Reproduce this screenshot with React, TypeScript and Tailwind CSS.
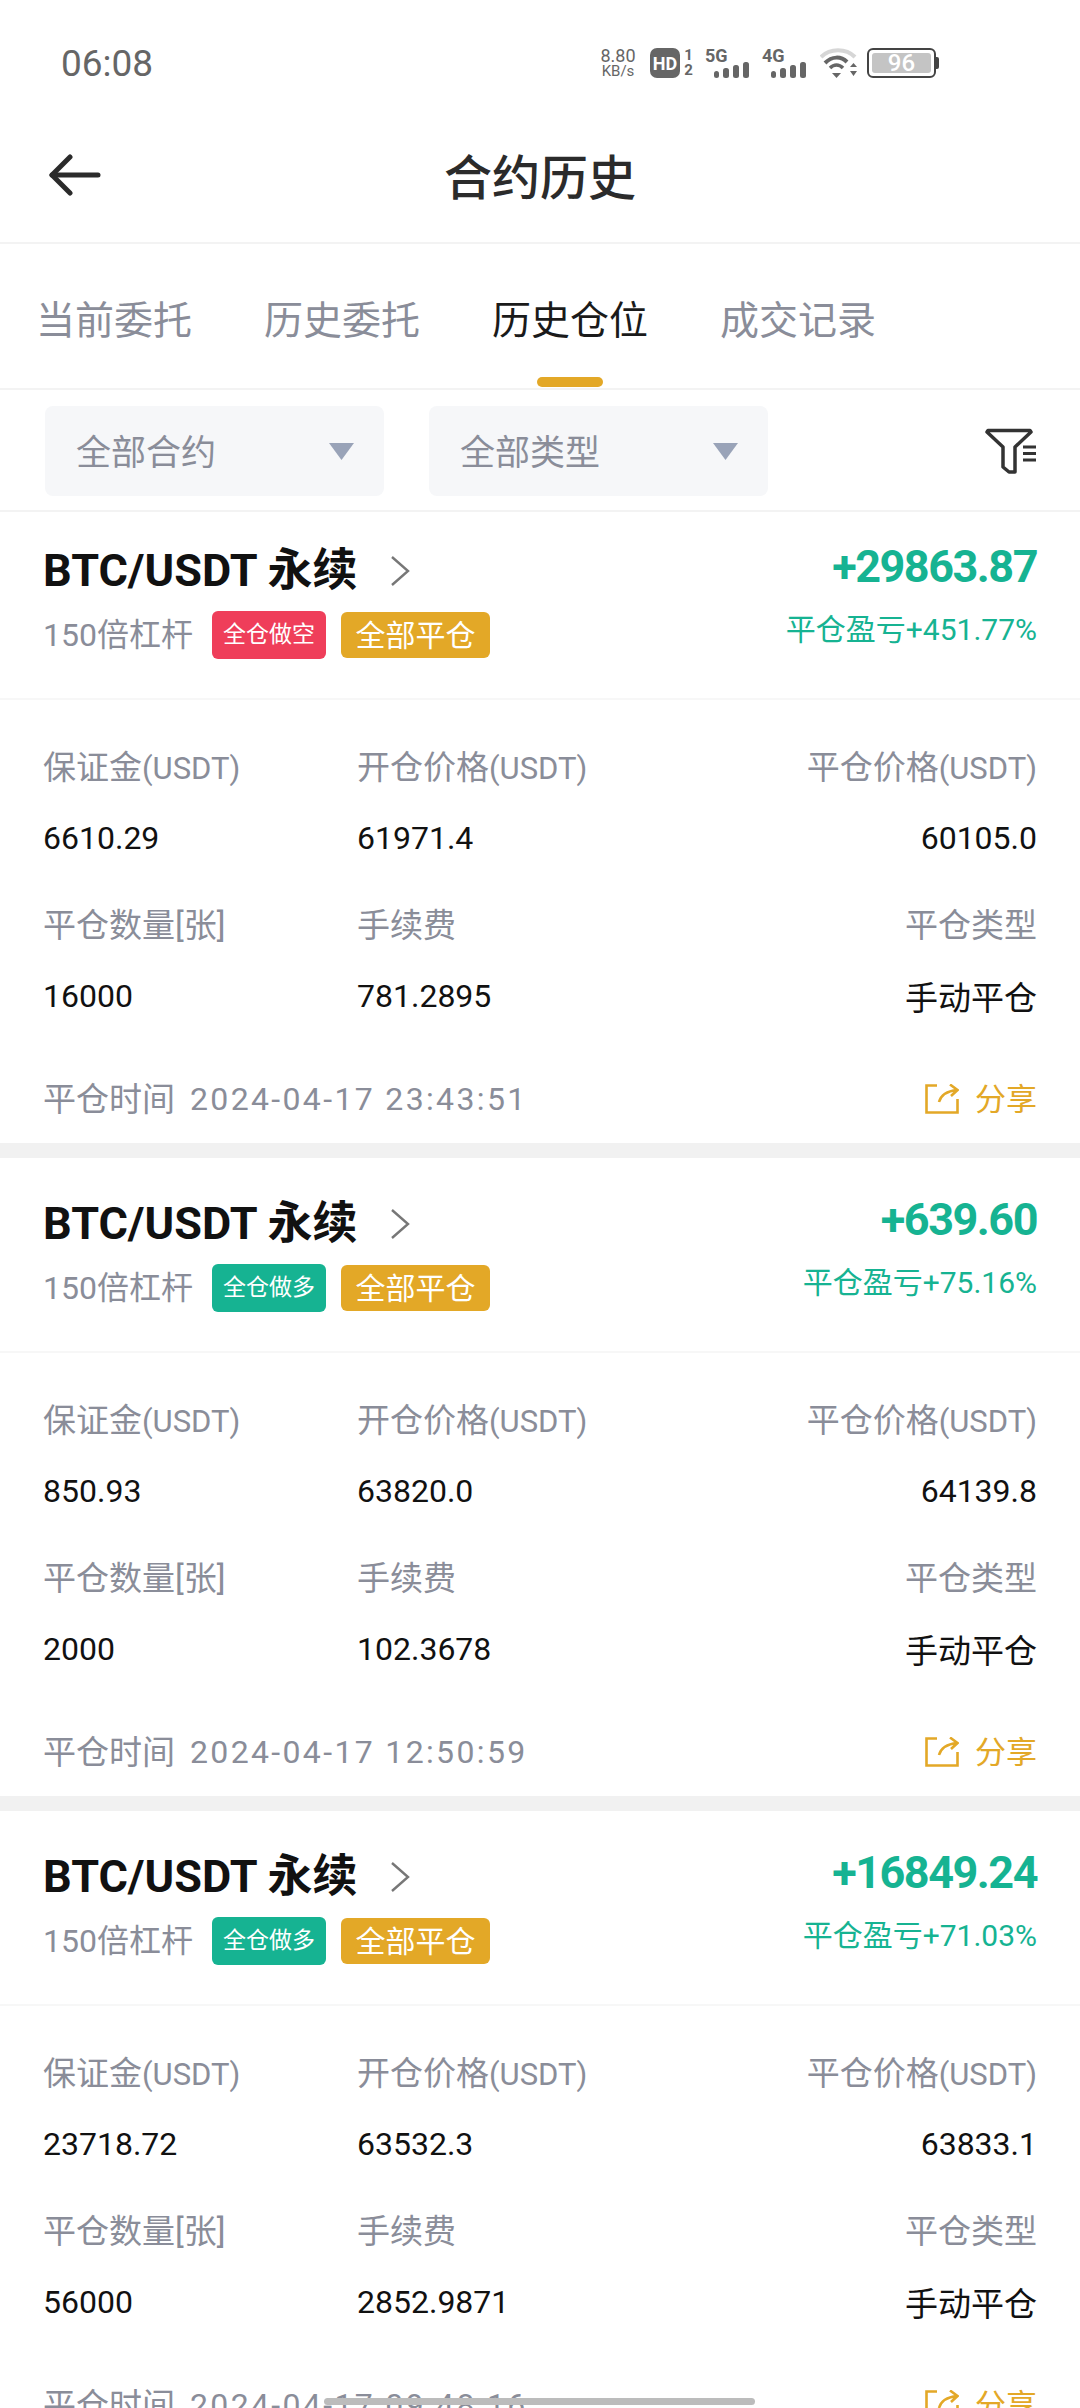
const positions = [
  {
    pnl: '+29863.87',
    rate: '+451.77%',
    side: '全仓做空',
    short: true,
    margin: '6610.29',
    open: '61971.4',
    close: '60105.0',
    amount: '16000',
    fee: '781.2895',
    time: '2024-04-17 23:43:51',
  },
  {
    pnl: '+639.60',
    rate: '+75.16%',
    side: '全仓做多',
    short: false,
    margin: '850.93',
    open: '63820.0',
    close: '64139.8',
    amount: '2000',
    fee: '102.3678',
    time: '2024-04-17 12:50:59',
  },
  {
    pnl: '+16849.24',
    rate: '+71.03%',
    side: '全仓做多',
    short: false,
    margin: '23718.72',
    open: '63532.3',
    close: '63833.1',
    amount: '56000',
    fee: '2852.9871',
    time: '2024-04-17 09:48:16',
  },
]

const tabs = ['当前委托', '历史委托', '历史仓位', '成交记录']

function NetworkIcon({ label }: { label: string }) {
  return (
    <div className="flex h-[30px] w-[44px]">
      <span className="w-[23px] shrink-0 text-[18px] font-bold leading-[16px]">{label}</span>
      <svg width="35" height="16" viewBox="0 0 35 16" className="mt-[14px] -ml-[14px] shrink-0" fill="#666">
        <rect x="0" y="9" width="5" height="7" rx="2.5" />
        <rect x="9" y="6" width="6" height="10" rx="2.5" />
        <rect x="19" y="3" width="6" height="13" rx="2.5" />
        <rect x="29" y="0" width="6" height="16" rx="2.5" />
      </svg>
    </div>
  )
}

function StatusBar() {
  return (
    <div className="flex h-[100px] items-start justify-between pl-[61px] pr-[141px] pt-[45px]">
      <span className="text-[37px] leading-[37px] text-[#666]">06:08</span>
      <div className="mt-[3px] flex h-[30px] items-start text-[#666]">
        <div className="flex w-[38px] flex-col items-center">
          <span className="text-[18px] leading-[16px]">8.80</span>
          <span className="text-[15px] leading-[15px]">KB/s</span>
        </div>
        <div className="ml-[13px] flex h-[30px] w-[30px] items-center justify-center rounded-[7px] bg-[#666] text-[18px] font-bold text-white">
          HD
        </div>
        <div className="ml-[4px] flex w-[9px] flex-col items-center text-[15px] font-bold leading-[15px]">
          <span>1</span>
          <span>2</span>
        </div>
        <div className="ml-[12px]">
          <NetworkIcon label="5G" />
        </div>
        <div className="ml-[13px]">
          <NetworkIcon label="4G" />
        </div>
        <svg width="37" height="30" viewBox="0 0 37 30" className="ml-[14px]" fill="none">
          <path d="M1 9 C10 0 26 0 35 9" stroke="#d6d6d6" strokeWidth="4" />
          <path d="M5 15 C12 8 21 8 27 14" stroke="#666" strokeWidth="4" />
          <path d="M10 20 C14 16 19 16 23 20" stroke="#666" strokeWidth="3.5" />
          <path d="M12 25 H21 L16.5 30 Z" fill="#666" />
          <path d="M30 19 L33.5 15 L37 19 Z M30 23 H37 L33.5 28 Z" fill="#666" />
        </svg>
        <div className="ml-[10px] flex items-center">
          <div className="flex h-[30px] w-[69px] rounded-[6px] border-[2px] border-[#444] p-[3px]">
            <div className="flex flex-1 items-center justify-center rounded-[3px] bg-[#c4c4c4] text-[24px] font-medium text-white">
              96
            </div>
          </div>
          <div className="h-[12px] w-[3px] rounded-r-[2px] bg-[#444]" />
        </div>
      </div>
    </div>
  )
}

function Header() {
  return (
    <div className="relative flex h-[144px] items-center justify-center border-b-2 border-[#f3f3f3] pt-[16px]">
      <svg
        width="52"
        height="42"
        viewBox="0 0 52 42"
        fill="none"
        stroke="#2b2b2b"
        strokeWidth="5"
        strokeLinecap="round"
        strokeLinejoin="round"
        className="absolute left-[49px] top-[54px]"
      >
        <path d="M21 3 L3 21 L21 39" />
        <path d="M3 21 H49" />
      </svg>
      <h1 className="text-[48px] font-medium leading-none text-[#2b2b2b]">合约历史</h1>
    </div>
  )
}

function Tabs() {
  return (
    <div className="flex h-[146px] gap-[72px] border-b-2 border-[#f3f3f3] pl-[36px]">
      {tabs.map((tab, index) => (
        <div key={tab} className="flex w-[156px] flex-col items-center pt-[55px]">
          <span className={`whitespace-nowrap text-[39px] leading-[44px] ${index === 2 ? 'text-[#1a1a1a]' : 'text-[#8a8d99]'}`}>
            {tab}
          </span>
          {index === 2 && <div className="mt-[34px] h-[10px] w-[66px] rounded-[5px] bg-[#e3a827]" />}
        </div>
      ))}
    </div>
  )
}

function Select({ label }: { label: string }) {
  return (
    <div className="flex h-[90px] w-[339px] items-center justify-between rounded-[8px] bg-[#f6f7f9] pl-[31px] pr-[30px]">
      <span className="pt-[4px] text-[35px] leading-none text-[#8a8d99]">{label}</span>
      <svg width="25" height="17" viewBox="0 0 25 17" fill="#99a3b8">
        <path d="M0 0 H25 L12.5 17 Z" />
      </svg>
    </div>
  )
}

function Filters() {
  return (
    <div className="flex h-[122px] items-start border-b-2 border-[#f3f3f3] pl-[45px] pt-[16px]">
      <Select label="全部合约" />
      <div className="ml-[45px]">
        <Select label="全部类型" />
      </div>
      <svg width="52" height="46" viewBox="0 0 52 46" fill="none" className="ml-[217px] mt-[22px]" stroke="#333">
        <path d="M3 2.5 H45 L46 4 L30 19 V44 H24 L18 39 V19 L2 4 Z" strokeWidth="3.5" strokeLinejoin="round" />
        <path d="M38 19 H51 M38 25.5 H51 M38 32 H51" strokeWidth="3" />
      </svg>
    </div>
  )
}

function Field({ label, unit, value, right }: { label: string; unit?: string; value: string; right?: boolean }) {
  return (
    <div className={`flex flex-col ${right ? 'items-end' : 'items-start'}`}>
      <span className="h-[40px] text-[33px] leading-[40px] text-[#8a8d99]">
        {label}
        {unit && <span className="text-[31px]">{unit}</span>}
      </span>
      <span className="mt-[30px] h-[40px] text-[32px] leading-[40px] text-[#111]">{value}</span>
    </div>
  )
}

function PositionCard({ item, first }: { item: (typeof positions)[number]; first: boolean }) {
  return (
    <div className="border-b-[15px] border-[#f1f1f1]">
      <div className={`flex justify-between border-b-2 border-[#f7f7f7] px-[43px] ${first ? 'h-[188px] pt-[27px]' : 'h-[195px] pt-[34px]'}`}>
        <div>
          <div className="flex h-[60px] items-center pt-[3px]">
            <span className="text-[45px] font-bold leading-none text-[#111]">BTC/USDT 永续</span>
            <svg width="20" height="32" viewBox="0 0 20 32" fill="none" stroke="#777" strokeWidth="2.4" className="ml-[32px]">
              <path d="M2 2 L18 16 L2 30" />
            </svg>
          </div>
          <div className="mt-[12px] flex h-[48px] items-center">
            <span className="text-[32px] leading-none text-[#8a8d99]">150倍杠杆</span>
            <span
              className={`ml-[19px] flex h-[48px] w-[114px] items-center justify-center rounded-[6px] text-[23px] text-white ${
                item.short ? 'bg-[#ef3e5a]' : 'bg-[#16b392]'
              }`}
            >
              {item.side}
            </span>
            <span className="ml-[15px] flex h-[46px] w-[149px] items-center justify-center rounded-[6px] bg-[#e3a827] text-[30px] text-white">
              全部平仓
            </span>
          </div>
        </div>
        <div className="flex flex-col items-end">
          <span className="h-[60px] text-[45px] font-bold leading-[56px] tracking-[-1.5px] text-[#16b392]">{item.pnl}</span>
          <span className="mt-[11px] text-[30px] leading-[40px] text-[#16b392]">平仓盈亏{item.rate}</span>
        </div>
      </div>
      <div className="grid grid-cols-[314px_1fr_auto] gap-y-[48px] px-[43px] pt-[48px]">
        <Field label="保证金" unit="(USDT)" value={item.margin} />
        <Field label="开仓价格" unit="(USDT)" value={item.open} />
        <Field label="平仓价格" unit="(USDT)" value={item.close} right />
        <Field label="平仓数量[张]" value={item.amount} />
        <Field label="手续费" value={item.fee} />
        <div className="flex flex-col items-end">
          <span className="h-[40px] text-[33px] leading-[40px] text-[#8a8d99]">平仓类型</span>
          <span className="mt-[33px] h-[40px] text-[33px] leading-[40px] text-[#111]">手动平仓</span>
        </div>
      </div>
      <div className="flex h-[124px] items-start justify-between px-[43px] pt-[60px]">
        <div className="flex h-[40px] items-center text-[33px] leading-none text-[#8a8d99]">
          <span>平仓时间</span>
          <span className="ml-[15px] text-[32px] tracking-[2.35px]">{item.time}</span>
        </div>
        <div className="flex h-[40px] items-center text-[#e3a827]">
          <svg width="34" height="30" viewBox="0 0 34 30" fill="none" stroke="#e3a827" strokeWidth="2.6">
            <path d="M12 1.5 H1.5 V28.5 H32.5 V15" />
            <path d="M14 18 C16 11 22 7 32 6 M25 0.5 L32.5 6 L26 12" />
          </svg>
          <span className="ml-[16px] text-[31px] leading-none">分享</span>
        </div>
      </div>
    </div>
  )
}

export default function App() {
  return (
    <div className="relative h-[2408px] w-[1080px] overflow-hidden bg-white font-['Roboto','Noto_Sans_CJK_SC',sans-serif]">
      <StatusBar />
      <Header />
      <Tabs />
      <Filters />
      {positions.map((item, index) => (
        <PositionCard key={item.pnl} item={item} first={index === 0} />
      ))}
      <div className="absolute bottom-[3px] left-[324px] h-[7px] w-[431px] rounded-full bg-[#bcbcbc]" />
    </div>
  )
}
